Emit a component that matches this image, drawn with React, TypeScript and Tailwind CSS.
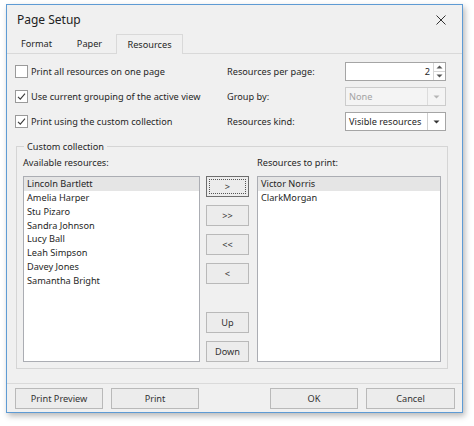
import React from "react";

const FONT = { fontFamily: '"Noto Sans", "Open Sans", sans-serif' };

function CheckBox({ checked, label }: { checked: boolean; label: string }) {
  return (
    <div className="flex items-center">
      <div className="w-[13px] h-[13px] border border-[#9a9a9a] bg-white flex items-center justify-center">
        {checked && (
          <svg width="11" height="11" viewBox="0 0 11 11">
            <path d="M2 5.8 L4.3 8.2 L9 2.6" fill="none" stroke="#3a3a3a" strokeWidth="1.1" />
          </svg>
        )}
      </div>
      <span className="ml-[3px]">{label}</span>
    </div>
  );
}

function DownTri({ color }: { color: string }) {
  return (
    <svg width="7" height="4" viewBox="0 0 7 4">
      <path d="M0.5 0.5 L6.5 0.5 L3.5 3.5 Z" fill={color} />
    </svg>
  );
}

function UpTri({ color }: { color: string }) {
  return (
    <svg width="7" height="4" viewBox="0 0 7 4">
      <path d="M0.5 3.5 L6.5 3.5 L3.5 0.5 Z" fill={color} />
    </svg>
  );
}

function Btn({ label, w, focused }: { label: string; w: string; focused?: boolean }) {
  return (
    <div
      className={`relative h-[21px] ${w} flex items-center justify-center bg-[#ececec] border ${
        focused ? "border-[#6e6e6e]" : "border-[#b9b9b9]"
      } text-[#333]`}
    >
      {focused && <span className="absolute inset-[2px] border border-dotted border-[#555]" />}
      <span>{label}</span>
    </div>
  );
}

function ListBox({ items }: { items: string[] }) {
  return (
    <div className="h-[186px] border border-[#abadb3] bg-white flex flex-col">
      {items.map((it, i) => (
        <div key={it} className={`h-[13.85px] flex items-center pl-[3px] ${i === 0 ? "bg-[#e5e5e5]" : ""}`}>
          {it}
        </div>
      ))}
    </div>
  );
}

export default function App() {
  return (
    <div className="w-[474px] h-[426px] bg-white pt-[4px] pl-[6px] text-[9.2px] text-[#262626]" style={FONT}>
      <div className="w-[457px] h-[409px] border border-[#5e9bd4] bg-[#f0f0f0] flex flex-col shadow-[2px_3px_6px_rgba(0,0,0,0.28)]">
        {/* title bar */}
        <div className="h-[29px] flex items-center justify-between pl-[10px] pr-[16px]">
          <span className="text-[12px] text-[#222]">Page Setup</span>
          <svg width="10" height="10" viewBox="0 0 10 10">
            <path d="M0.5 0.5 L9.5 9.5 M9.5 0.5 L0.5 9.5" stroke="#333" strokeWidth="1" />
          </svg>
        </div>

        {/* tabs */}
        <div className="h-[20px] flex items-stretch pl-[3px] border-b border-[#d9d9d9]">
          <div className="w-[53px] flex items-center justify-center">Format</div>
          <div className="w-[53px] flex items-center justify-center">Paper</div>
          <div className="w-[67px] -mb-px flex items-center justify-center border-x border-t border-[#d9d9d9] bg-[#f0f0f0]">
            Resources
          </div>
        </div>

        {/* options */}
        <div className="pt-[5px] pl-[8px] flex flex-col">
          <div className="h-[25px] flex items-center">
            <div className="w-[212px]">
              <CheckBox checked={false} label="Print all resources on one page" />
            </div>
            <div className="w-[118px]">Resources per page:</div>
            <div className="w-[101px] h-[19px] border border-[#a5a5a5] bg-white flex">
              <div className="flex-1 flex items-center justify-end pr-[3px]">2</div>
              <div className="w-[12px] border-l border-[#d6d6d6] flex flex-col">
                <div className="flex-1 flex items-center justify-center border-b border-[#d6d6d6]">
                  <UpTri color="#555" />
                </div>
                <div className="flex-1 flex items-center justify-center">
                  <DownTri color="#555" />
                </div>
              </div>
            </div>
          </div>
          <div className="h-[25px] flex items-center">
            <div className="w-[212px]">
              <CheckBox checked label="Use current grouping of the active view" />
            </div>
            <div className="w-[118px]">Group by:</div>
            <div className="w-[101px] h-[19px] border border-[#cccccc] bg-[#f4f4f4] flex text-[#a3a3a3]">
              <div className="flex-1 flex items-center pl-[3px]">None</div>
              <div className="w-[18px] border-l border-[#dcdcdc] flex items-center justify-center">
                <DownTri color="#b5b5b5" />
              </div>
            </div>
          </div>
          <div className="h-[25px] flex items-center">
            <div className="w-[212px]">
              <CheckBox checked label="Print using the custom collection" />
            </div>
            <div className="w-[118px]">Resources kind:</div>
            <div className="w-[101px] h-[19px] border border-[#a5a5a5] bg-white flex">
              <div className="flex-1 flex items-center pl-[3px]">Visible resources</div>
              <div className="w-[18px] border-l border-[#cfcfcf] flex items-center justify-center">
                <DownTri color="#333" />
              </div>
            </div>
          </div>
        </div>

        {/* group box */}
        <div className="mt-[12px] ml-[9px] w-[432px] h-[223px] border border-[#d5d5d5] relative flex pt-[8px] px-[6px] pb-[6px]">
          <span className="absolute -top-[8px] left-[7px] px-[3px] bg-[#f0f0f0] leading-[15px]">Custom collection</span>
          <div className="w-[177px] flex flex-col">
            <div className="h-[15px] mb-[6px] flex items-center">Available resources:</div>
            <ListBox
              items={[
                "Lincoln Bartlett",
                "Amelia Harper",
                "Stu Pizaro",
                "Sandra Johnson",
                "Lucy Ball",
                "Leah Simpson",
                "Davey Jones",
                "Samantha Bright",
              ]}
            />
          </div>
          <div className="ml-[6px] w-[43px] mt-[21px] h-[186px] flex flex-col justify-between">
            <div className="flex flex-col gap-[8px]">
              <Btn label=">" w="w-[43px]" focused />
              <Btn label=">>" w="w-[43px]" />
              <Btn label="<<" w="w-[43px]" />
              <Btn label="<" w="w-[43px]" />
            </div>
            <div className="flex flex-col gap-[8px]">
              <Btn label="Up" w="w-[43px]" />
              <Btn label="Down" w="w-[43px]" />
            </div>
          </div>
          <div className="ml-[8px] w-[184px] flex flex-col">
            <div className="h-[15px] mb-[6px] flex items-center">Resources to print:</div>
            <ListBox items={["Victor Norris", "ClarkMorgan"]} />
          </div>
        </div>

        {/* footer */}
        <div className="mt-[14px] border-t border-[#dadada] pt-[4px] pl-[8px] pr-[7px] flex items-start">
          <div className="flex gap-[8px]">
            <Btn label="Print Preview" w="w-[88px]" />
            <Btn label="Print" w="w-[88px]" />
          </div>
          <div className="ml-auto flex gap-[8px]">
            <Btn label="OK" w="w-[88px]" />
            <Btn label="Cancel" w="w-[89px]" />
          </div>
        </div>
      </div>
    </div>
  );
}
